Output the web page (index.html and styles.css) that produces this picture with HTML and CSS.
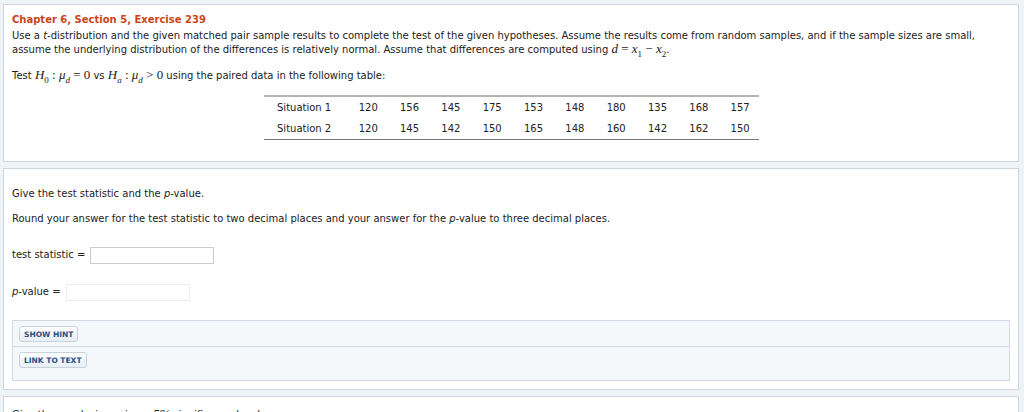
FILE: index.html
```html
<!DOCTYPE html>
<html lang="en">
<head>
    <meta charset="UTF-8">
    <title>Chapter 6, Section 5, Exercise 239</title>
    <link rel="stylesheet" href="styles.css">
</head>
<body>
    <div class="page">
        <div class="card intro">
            <div class="title">Chapter 6, Section 5, Exercise 239</div>
            <p class="text">Use a <i>t</i>-distribution and the given matched pair sample results to complete the test of the given hypotheses. Assume the results come from random samples, and if the sample sizes are small,<br>
            assume the underlying distribution of the differences is relatively normal. Assume that differences are computed using <span class="math"><i>d</i> = <i>x</i><sub>1</sub> &minus; <i>x</i><sub>2</sub></span>.</p>
            <p class="text test">Test <span class="math"><i>H</i><sub>0</sub> : <i>&mu;</i><sub><i>d</i></sub> = 0</span> vs <span class="math"><i>H</i><sub><i>a</i></sub> : <i>&mu;</i><sub><i>d</i></sub> &gt; 0</span> using the paired data in the following table:</p>
            <table class="data">
                <tr>
                    <td class="label">Situation 1</td>
                    <td>120</td><td>156</td><td>145</td><td>175</td><td>153</td><td>148</td><td>180</td><td>135</td><td>168</td><td>157</td>
                </tr>
                <tr>
                    <td class="label">Situation 2</td>
                    <td>120</td><td>145</td><td>142</td><td>150</td><td>165</td><td>148</td><td>160</td><td>142</td><td>162</td><td>150</td>
                </tr>
            </table>
        </div>

        <div class="card answer">
            <p class="text">Give the test statistic and the <i>p</i>-value.</p>
            <p class="text round">Round your answer for the test statistic to two decimal places and your answer for the <i>p</i>-value to three decimal places.</p>
            <div class="field stat">test statistic = <input type="text" class="box"></div>
            <div class="field pval"><i>p</i>-value = <input type="text" class="box faint"></div>
            <div class="hints">
                <div class="hint-row"><button class="btn">Show Hint</button></div>
                <div class="hint-row last"><button class="btn">Link to Text</button></div>
            </div>
        </div>

        <div class="card next">
            <p class="text">Give the conclusion using a <span class="math"><i>5%</i></span> significance level.</p>
        </div>
    </div>
</body>
</html>
```

FILE: styles.css
```css
body
{
    margin: 0;
    background: #eef3f8;
    font-family: "DejaVu Sans", Verdana, sans-serif;
    font-size: 10px;
    line-height: 14px;
    color: #222;
}
.page
{
    padding: 4px 5px 0 3px;
    display: flex;
    flex-direction: column;
    gap: 6px;
}
.card
{
    background: #fff;
    border: 1px solid #cfd6de;
    padding: 8px 8px 0 8px;
}
.title
{
    color: #c8461a;
    font-weight: bold;
    font-size: 10px;
}
.text
{
    margin: 2px 0 0 0;
}
.text.test
{
    margin-top: 12px;
}
.math
{
    font-family: "Liberation Serif", "DejaVu Serif", serif;
    font-size: 13px;
    line-height: 10px;
}
.math sub
{
    font-size: 9px;
    line-height: 0;
}
.data
{
    margin: 12px 0 21px 252px;
    width: 495px;
    border-collapse: collapse;
    border-top: 2px solid #b4b4b4;
    border-bottom: 1px solid #777;
}
.data td
{
    padding: 0 0 0 13px;
    height: 21px;
    width: 28px;
}
.data td.label
{
    width: 68px;
}
.answer
{
    padding-top: 16px;
}
.round
{
    margin-top: 11px;
}
.field
{
    margin-top: 21px;
}
.pval
{
    margin-top: 20px;
}
.box
{
    width: 124px;
    height: 17px;
    box-sizing: border-box;
    border: 1px solid #ccc;
    padding: 0 3px;
    margin: 0 0 0 2px;
    vertical-align: -2px;
}
.box.faint
{
    border-color: #eee;
}
.hints
{
    margin: 19px 0 8px 0;
    background: #f4f8fb;
    border: 1px solid #d2d9e1;
}
.hint-row
{
    padding: 5px 6px 4px 6px;
}
.hint-row.last
{
    border-top: 1px solid #d2d9e1;
    padding-bottom: 12px;
}
.btn
{
    display: block;
    font-family: "DejaVu Sans", Verdana, sans-serif;
    font-size: 7.5px;
    font-weight: bold;
    text-transform: uppercase;
    color: #2b4f88;
    background: linear-gradient(#ffffff, #e6edf3);
    border: 1px solid #c9d1da;
    border-radius: 3px;
    height: 16px;
    padding: 0 4px;
}
.next
{
    padding-top: 9px;
    height: 40px;
}
```
